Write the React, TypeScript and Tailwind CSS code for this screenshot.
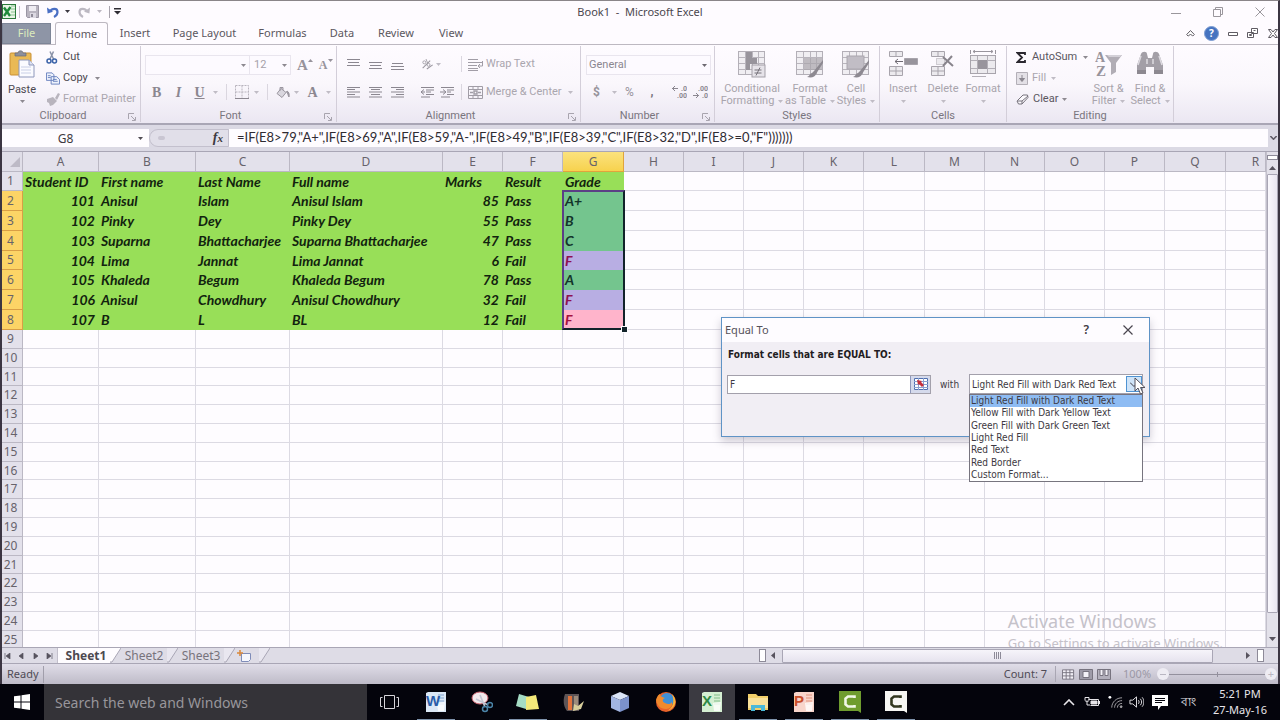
import type { ReactNode } from "react";
import clsx from "clsx";

const FORMULA =
  '=IF(E8>79,"A+",IF(E8>69,"A",IF(E8>59,"A-",IF(E8>49,"B",IF(E8>39,"C",IF(E8>32,"D",IF(E8>=0,"F")))))))';

const COLUMNS = [
  { name: "A", width: "w-[76px]" },
  { name: "B", width: "w-[97px]" },
  { name: "C", width: "w-[94px]" },
  { name: "D", width: "w-[153px]" },
  { name: "E", width: "w-[60px]" },
  { name: "F", width: "w-[60px]" },
  { name: "G", width: "w-[61px]" },
  { name: "H", width: "w-[60px]" },
  { name: "I", width: "w-[60px]" },
  { name: "J", width: "w-[60px]" },
  { name: "K", width: "w-[60px]" },
  { name: "L", width: "w-[61px]" },
  { name: "M", width: "w-[60px]" },
  { name: "N", width: "w-[60px]" },
  { name: "O", width: "w-[60px]" },
  { name: "P", width: "w-[60px]" },
  { name: "Q", width: "w-[61px]" },
  { name: "R", width: "" },
];

const ROWS: string[][] = [
  ["Student ID", "First name", "Last Name", "Full name", "Marks", "Result", "Grade"],
  ["101", "Anisul", "Islam", "Anisul Islam", "85", "Pass", "A+"],
  ["102", "Pinky", "Dey", "Pinky Dey", "55", "Pass", "B"],
  ["103", "Suparna", "Bhattacharjee", "Suparna Bhattacharjee", "47", "Pass", "C"],
  ["104", "Lima", "Jannat", "Lima Jannat", "6", "Fail", "F"],
  ["105", "Khaleda", "Begum", "Khaleda Begum", "78", "Pass", "A"],
  ["106", "Anisul", "Chowdhury", "Anisul Chowdhury", "32", "Fail", "F"],
  ["107", "B", "L", "BL", "12", "Fail", "F"],
];

const FORMATS = [
  "Light Red Fill with Dark Red Text",
  "Yellow Fill with Dark Yellow Text",
  "Green Fill with Dark Green Text",
  "Light Red Fill",
  "Red Text",
  "Red Border",
  "Custom Format...",
];

const ROW_COUNT = 25;

function rowHeight(row: number) {
  if (row === 1 || row === 5) return "h-[19px]";
  if (row <= 8) return "h-[20px]";
  return row % 5 === 1 ? "h-[18px]" : "h-[19px]";
}

function gradeFill(row: number, value: string) {
  if (row === 1) return "bg-[#98df58] text-[#12230f]";
  if (row === 8) return "bg-[#ffb4cb] text-[#a5123f]";
  if (value === "F") return "bg-[#b8aee3] text-[#8f1152]";
  return "bg-[#74c58e] text-[#12352a]";
}

function Caret({ className = "text-[#8d8990]" }: { className?: string }) {
  return (
    <svg viewBox="0 0 5 3" className={clsx("w-[5px] h-[3px] shrink-0", className)} fill="currentColor">
      <path d="M0 0h5L2.5 3z" />
    </svg>
  );
}

/* ---------- quick access toolbar and title bar ---------- */

function ExcelBadge() {
  return (
    <svg viewBox="0 0 14 15" className="w-[14px] h-[15px]">
      <rect x=".5" y=".5" width="13" height="14" fill="#e9f5e6" stroke="#2b7a3b" />
      <path d="M9 2h4M9 5h4M9 8h4M9 11h4" stroke="#8ac292" />
      <path d="M2 3.500l6 8.500M8.500 3l-6.500 9" stroke="#1f8a3a" strokeWidth="2.400" />
    </svg>
  );
}

function SaveIcon() {
  return (
    <svg viewBox="0 0 13 13" className="w-[13px] h-[13px]">
      <path d="M.5.5h12v12h-11l-1-1z" fill="#b9b4c0" stroke="#9a95a3" />
      <path d="M3 1h7v5H3z" fill="#efecf2" />
      <path d="M4 8h6v5H4z" fill="#dcd8e2" />
      <path d="M5 9h2v3H5z" fill="#8f8a98" />
    </svg>
  );
}

function UndoIcon({ className }: { className: string }) {
  return (
    <svg viewBox="0 0 12 12" className={clsx("w-3 h-3", className)} fill="none" stroke="currentColor">
      <path d="M3 5.500C5 2 10.500 1.800 10.500 6c0 2.500-1.500 4-3.500 5" strokeWidth="2.200" />
      <path d="M0 1.500l.6 6 5.400-1.700z" fill="currentColor" stroke="none" />
    </svg>
  );
}

function TitleBar() {
  return (
    <header className="grid grid-cols-[1fr_auto_1fr] items-center h-[21px] bg-[#fefbff]">
      <div className="flex items-center h-full">
        <ExcelBadge />
        <span className="ml-[3px] w-px h-3 bg-[#c9c4ce]" />
        <button aria-label="Save" className="ml-[6px]"><SaveIcon /></button>
        <button aria-label="Undo" className="ml-2 flex items-center gap-[6px]">
          <UndoIcon className="text-[#4a6fc4]" />
          <Caret className="text-[#3a3740]" />
        </button>
        <button aria-label="Redo" className="ml-2 flex items-center gap-[7px]">
          <UndoIcon className="text-[#bcb8c2] -scale-x-100" />
          <Caret className="text-[#bcb8c2]" />
        </button>
        <span className="ml-[7px] w-px h-3 bg-[#a9a4ae]" />
        <button aria-label="Customize Quick Access Toolbar" className="ml-1">
          <svg viewBox="0 0 7 7" className="w-[7px] h-[7px]" fill="#2f2c34">
            <path d="M0 0h7v1.500H0zM0 3h7L3.500 6.500z" />
          </svg>
        </button>
      </div>
      <h1 className="text-[11px] leading-4 text-[#4b474e]">Book1&nbsp; -&nbsp; Microsoft Excel</h1>
      <div className="flex justify-end items-center gap-8 pr-[13px] text-[#9a969c]">
        <button aria-label="Minimize">
          <svg viewBox="0 0 10 10" className="w-[10px] h-[10px]" stroke="currentColor"><path d="M0 6.500h10" /></svg>
        </button>
        <button aria-label="Restore">
          <svg viewBox="0 0 10 10" className="w-[10px] h-[10px]" fill="none" stroke="currentColor">
            <path d="M.5 2.500h7v7h-7zM2.500 2.500v-2h7v7h-2" />
          </svg>
        </button>
        <button aria-label="Close">
          <svg viewBox="0 0 10 10" className="w-[10px] h-[10px]" stroke="currentColor">
            <path d="M.5.5l9 9M9.500.5l-9 9" />
          </svg>
        </button>
      </div>
    </header>
  );
}

/* ---------- ribbon ---------- */

const TABS = [
  { label: "Insert", width: "w-[54px]" },
  { label: "Page Layout", width: "w-[85px]" },
  { label: "Formulas", width: "w-[71px]" },
  { label: "Data", width: "w-[48px]" },
  { label: "Review", width: "w-[60px]" },
  { label: "View", width: "w-[50px]" },
];

function RibbonTabs() {
  return (
    <nav className="flex items-end h-[23px] bg-[#fefbff] border-b border-[#bdb8c1] text-[11px] text-[#5b575e]">
      <button className="w-[49px] h-[21px] bg-[#8e95a6] border border-[#7d8597] text-[#dcebbd]">File</button>
      <button className="relative z-10 ml-1 -mb-px w-[53px] h-[23px] bg-[#fefbff] border border-b-0 border-[#bdb8c1] rounded-t-[3px]">
        Home
      </button>
      {TABS.map((tab) => (
        <button key={tab.label} className={clsx("h-[21px] whitespace-nowrap", tab.width)}>{tab.label}</button>
      ))}
      <div className="ml-auto flex items-center gap-[9px] h-[22px] text-[#5f5b63]">
        <button aria-label="Minimize the Ribbon">
          <svg viewBox="0 0 9 7" className="w-[9px] h-[7px]" fill="#fff" stroke="currentColor">
            <path d="M.7 4.500l3.800-4 3.800 4-1.500 1.500H6.500l-2-2-2 2H2z" />
          </svg>
        </button>
        <button aria-label="Help" className="w-[15px] h-[15px] rounded-full bg-[#4673c0] border border-[#7d9dd2] text-white text-[10px] leading-3 font-bold">
          ?
        </button>
        <button aria-label="Minimize Window">
          <svg viewBox="0 0 10 8" className="w-[10px] h-2" fill="#fff" stroke="currentColor"><path d="M.5 3.500h9v3h-9z" /></svg>
        </button>
        <button aria-label="Restore Window">
          <svg viewBox="0 0 12 10" className="w-3 h-[10px]" fill="#fff" stroke="currentColor">
            <path d="M4.500.5h6v5h-6zM6.500 2.500h2M.5 4.500h6v5h-6zM2.500 6.500h2v1h-2z" />
          </svg>
        </button>
        <button aria-label="Close Window">
          <svg viewBox="0 0 10 9" className="w-[10px] h-[9px]" fill="#fff" stroke="currentColor">
            <path d="M.5.5h2.500L5 3 7 .5h2.500L6.500 4.500l3 4H7L5 6 3 8.500H.5l3-4z" />
          </svg>
        </button>
      </div>
    </nav>
  );
}

interface GroupProps {
  title: string;
  width: string;
  launcher?: boolean;
  children: ReactNode;
}

function Group({ title, width, launcher, children }: GroupProps) {
  return (
    <section className={clsx("flex flex-col shrink-0 border-r border-[#d3ced9] my-px", width)}>
      <div className="flex-1 min-h-0">{children}</div>
      <div className={clsx("relative flex justify-center items-center h-3 text-[11px] leading-3 text-[#79757e]", launcher && "pr-4")}>
        {title}
        {launcher && (
          <button aria-label={`${title} options`} className="absolute right-1 top-[3px]">
            <svg viewBox="0 0 8 8" className="w-2 h-2" fill="none" stroke="#a8a4ae">
              <path d="M.5 6V.5H6M3 3l4 4M7.500 4v3.500H4" />
            </svg>
          </button>
        )}
      </div>
    </section>
  );
}

function PasteIcon() {
  return (
    <svg viewBox="0 0 26 28" className="w-[26px] h-7">
      <rect x="1" y="3" width="21" height="22" rx="1" fill="#e9b955" stroke="#c98f34" />
      <path d="M6 5V3h3c0-3 5-3 5 0h3v3H6z" fill="#8c8f9c" stroke="#696b78" strokeWidth=".7" />
      <path d="M10 10h10l5 5v12H10z" fill="#fbfbff" stroke="#8e97bb" />
      <path d="M20 10v5h5" fill="#dde2f3" stroke="#8e97bb" />
      <path d="M12 17h10M12 20h10M12 23h10" stroke="#c9cfe6" />
    </svg>
  );
}

function ClipboardGroup() {
  return (
    <Group title="Clipboard" width="w-[139px]" launcher>
      <div className="flex">
        <button className="flex flex-col items-center w-10 pt-1 text-[11px] leading-3 text-[#4c4850]">
          <PasteIcon />
          <span className="mt-[6px] mb-1">Paste</span>
          <Caret />
        </button>
        <div className="flex flex-col items-start pt-px pl-1 text-[11px] text-[#4c4850]">
          <button className="flex items-center gap-[5px] h-[21px]">
            <svg viewBox="0 0 12 13" className="w-3 h-[13px]" fill="none">
              <path d="M4 .5L7.500 8M7.500.5L4 8" stroke="#8a92a8" strokeWidth="1.500" />
              <circle cx="3" cy="10" r="2" stroke="#3a62a8" strokeWidth="1.500" />
              <circle cx="8.500" cy="10" r="2" stroke="#3a62a8" strokeWidth="1.500" />
            </svg>
            Cut
          </button>
          <button className="flex items-center gap-[3px] h-[21px]">
            <svg viewBox="0 0 15 13" className="w-[14px] h-[13px]" fill="#eef2fc" stroke="#6780bd">
              <path d="M.5.5h6l2 2v6h-8zM5.500 4.500h6l3 3v5h-9z" />
              <path d="M2 3.500h3M2 5.500h3M7.500 7.500h4M7.500 9.500h5" />
            </svg>
            Copy
            <span className="ml-1"><Caret /></span>
          </button>
          <button className="flex items-center gap-[3px] h-[21px] text-[#aaa6ae] whitespace-nowrap">
            <svg viewBox="0 0 14 13" className="w-[14px] h-[13px]" fill="#b8b4bd">
              <path d="M9 5l3-5 2 1-3 6zM1 6l6-2 4 4-4 4-3 1-1-3-2-1z" />
            </svg>
            Format Painter
          </button>
        </div>
      </div>
    </Group>
  );
}

function Divider() {
  return <span className="w-px h-4 bg-[#dad6df]" />;
}

function FontGroup() {
  return (
    <Group title="Font" width="w-[196px]" launcher>
      <div className="flex items-center pt-[9px] pl-1">
        <div className="relative flex items-center">
          <select aria-label="Font" disabled className="appearance-none w-[105px] h-5 border border-[#e9e5ee] bg-[#fdfaff]" />
          <Caret className="absolute right-1 text-[#8d8990]" />
        </div>
        <div className="relative flex items-center">
          <select aria-label="Font size" disabled className="appearance-none w-[41px] h-5 pl-1 border border-l-0 border-[#e9e5ee] bg-[#fdfaff] text-[11px] text-[#a5a1a9]">
            <option>12</option>
          </select>
          <Caret className="absolute right-1 text-[#8d8990]" />
        </div>
        <button aria-label="Grow font" className="ml-[6px] font-[Liberation_Serif] font-bold text-[15px] leading-5 text-[#97939c] flex">
          A<Caret className="mt-1 rotate-180 text-[#97939c]" />
        </button>
        <button aria-label="Shrink font" className="ml-[6px] font-[Liberation_Serif] font-bold text-[12px] leading-5 text-[#97939c] flex">
          A<Caret className="mt-1 text-[#97939c]" />
        </button>
      </div>
      <div className="flex items-center h-5 mt-[7px] pl-[11px] font-[Liberation_Serif] text-[14px] text-[#8b8790]">
        <button className="w-[9px] font-bold">B</button>
        <button className="w-[9px] ml-[13px] italic font-bold">I</button>
        <button className="w-[11px] ml-[11px] underline font-bold">U</button>
        <Caret className="ml-2 mr-2 text-[#c0bcc5]" />
        <Divider />
        <svg viewBox="0 0 14 14" className="ml-2 w-[14px] h-[14px]" fill="none" stroke="#b9b5be">
          <path d="M.5.5h13v13M.5.5v13M7 .5v13M.5 7h13" strokeDasharray="2 1" />
          <path d="M0 13.500h14" stroke="#8b8790" />
        </svg>
        <Caret className="ml-[5px] mr-2 text-[#c0bcc5]" />
        <Divider />
        <svg viewBox="0 0 14 13" className="ml-2 w-[14px] h-[13px]" fill="#d9d6de" stroke="#9b97a0">
          <path d="M5 2.500l5 4-4 5-5-4zM4 5V1.500h3V4" />
          <path d="M11 5c2 1 2.500 3 2 6-1-1-1-4-2.500-5z" fill="#9b97a0" />
        </svg>
        <Caret className="ml-1 mr-2 text-[#c0bcc5]" />
        <button aria-label="Font color" className="w-[11px] font-bold">A</button>
        <Caret className="ml-2 text-[#c0bcc5]" />
      </div>
    </Group>
  );
}

function LinesIcon({ path, className }: { path: string; className?: string }) {
  return (
    <svg viewBox="0 0 14 12" className={clsx("w-[14px] h-3", className)} stroke="#8b8790" fill="none">
      <path d={path} />
    </svg>
  );
}

function AlignmentGroup() {
  return (
    <Group title="Alignment" width="w-[244px]" launcher>
      <div className="flex items-center h-5 mt-2 pl-[10px]">
        <LinesIcon path="M0 1.500h13M1 4.500h11M0 7.500h13" />
        <LinesIcon path="M0 4.500h13M1 7.500h11M0 10.500h13" className="ml-2" />
        <LinesIcon path="M1 5.500h11M0 8.500h13M0 11.500h13" className="ml-2" />
        <span className="ml-2"><Divider /></span>
        <svg viewBox="0 0 18 14" className="ml-2 w-[15px] h-[14px]" fill="none" stroke="#9b97a0">
          <path d="M2 12l9-9M14 8l-7 5" strokeWidth="1.300" />
          <circle cx="4" cy="5" r="1.800" />
          <circle cx="9" cy="8" r="1.800" />
          <path d="M6 1l2 5" />
        </svg>
        <Caret className="text-[#c0bcc5]" />
        <span className="ml-[20px] w-px h-4 bg-[#dad6df]" />
        <button className="flex items-center gap-[3px] ml-[6px] text-[11px] text-[#aaa6ae] whitespace-nowrap">
          <svg viewBox="0 0 15 13" className="w-[15px] h-[13px]" fill="none" stroke="#a19da6">
            <path d="M0 1.500h10M0 4.500h14M0 7.500h9M0 10.500h10M0 12.500h10M14.500 3v5h-4M12 6l-2 2 2 2" />
          </svg>
          Wrap Text
        </button>
      </div>
      <div className="flex items-center h-5 mt-2 pl-[10px]">
        <LinesIcon path="M0 1.500h13M0 3.500h8M0 6h13M0 8.500h8M0 11h13" />
        <LinesIcon path="M0 1.500h13M2 3.500h9M0 6h13M2 8.500h9M0 11h13" className="ml-2" />
        <LinesIcon path="M0 1.500h13M5 3.500h8M0 6h13M5 8.500h8M0 11h13" className="ml-2" />
        <span className="ml-2"><Divider /></span>
        <LinesIcon path="M1 1.500h13M6 4h8M6 6h5M6 8.500h8M1 11h9M4 3.500L1 6l3 2.500M1 6h4" className="ml-[7px]" />
        <LinesIcon path="M1 1.500h13M7 4h7M7 6h4M7 8.500h7M1 11h9M3 3.500L6 6 3 8.500M0 6h5" className="ml-[6px]" />
        <span className="ml-[7px] w-px h-4 bg-[#dad6df]" />
        <button className="flex items-center gap-[3px] ml-[6px] text-[11px] text-[#aaa6ae] whitespace-nowrap">
          <svg viewBox="0 0 15 13" className="w-[15px] h-[13px]" fill="none" stroke="#a19da6">
            <path d="M.5.5h14v12H.5zM.5 3.500h14M.5 9.500h14M5 .5v3M10 .5v3M5 9.500v3M10 9.500v3" />
            <path d="M2 6.500h3M13 6.500h-3M6 5h3v3H6z" strokeWidth="1.400" />
          </svg>
          Merge &amp; Center
          <Caret className="ml-[3px] text-[#c0bcc5]" />
        </button>
      </div>
    </Group>
  );
}

function DecimalIcon({ top, bottom, arrow }: { top: string; bottom: string; arrow: string }) {
  return (
    <svg viewBox="0 0 15 14" className="w-[15px] h-[14px]" fill="#8b8790">
      <text x="15" y="6" textAnchor="end" fontSize="7" fontWeight="bold">{top}</text>
      <text x="15" y="13" textAnchor="end" fontSize="7" fontWeight="bold">{bottom}</text>
      <path d={arrow} fill="none" stroke="#8b8790" />
    </svg>
  );
}

function NumberGroup() {
  return (
    <Group title="Number" width="w-[134px]" launcher>
      <div className="relative flex items-center mt-[9px] ml-[5px] w-[125px]">
        <select aria-label="Number format" disabled className="appearance-none w-full h-5 pl-[2px] border border-[#e9e5ee] bg-[#fdfaff] text-[11px] text-[#8b8790]">
          <option>General</option>
        </select>
        <Caret className="absolute right-1 text-[#6d6971]" />
      </div>
      <div className="flex items-center h-5 mt-[7px] pl-3 text-[12px] text-[#97939c]">
        <button className="w-[7px] font-bold">$</button>
        <Caret className="ml-3 text-[#c0bcc5]" />
        <button className="ml-[6px] w-[13px]">%</button>
        <button aria-label="Comma style" className="ml-[14px] w-1 font-bold leading-3 text-[#77737c]">,</button>
        <span className="ml-[10px]"><Divider /></span>
        <span className="ml-2 flex gap-[6px]">
          <DecimalIcon top=".0" bottom=".00" arrow="M0 3.500h6M3 1L.5 3.500 3 6" />
          <DecimalIcon top=".00" bottom=".0" arrow="M0 10.500h6M3 8l2.500 2.500L3 13" />
        </span>
      </div>
    </Group>
  );
}

interface BigButtonProps {
  width: string;
  lines: string[];
  icon: ReactNode;
}

function BigButton({ width, lines, icon }: BigButtonProps) {
  return (
    <button className={clsx("flex flex-col items-center pt-1 text-[11px] leading-3 text-[#a8a4ac] whitespace-nowrap", width)}>
      {icon}
      <span className="mt-[5px]">{lines[0]}</span>
      <span className="flex items-center gap-1 h-3">
        {lines[1]}
        <Caret className="text-[#c0bcc5]" />
      </span>
    </button>
  );
}

function TableIcon({ children }: { children?: ReactNode }) {
  return (
    <svg viewBox="0 0 28 28" className="w-7 h-7" fill="none">
      <rect x=".5" y="1.500" width="26" height="23" fill="#f0eef2" stroke="#b3afb7" />
      <path d="M1 7.500h25M1 13.500h25M1 19.500h25M7.500 2v22M14.500 2v22M20.500 2v22" stroke="#b9b5bd" />
      {children}
    </svg>
  );
}

function StylesGroup() {
  return (
    <Group title="Styles" width="w-[165px]">
      <div className="flex pl-1">
        <BigButton
          width="w-[66px]"
          lines={["Conditional", "Formatting"]}
          icon={
            <TableIcon>
              <path d="M8 2h6v6h5v6h-7v6H8z" fill="#98949c" />
              <rect x="14" y="15" width="13" height="12" fill="#e6e3e9" stroke="#a39fa7" />
              <path d="M16.500 20h7M16.500 23h7M22 17.500l-4 8" stroke="#77737b" />
            </TableIcon>
          }
        />
        <BigButton
          width="w-[50px]"
          lines={["Format", "as Table"]}
          icon={
            <TableIcon>
              <path d="M8 8h18v12H8z" fill="#a9a5ad" fillOpacity=".7" />
              <path d="M27 10l-9 11-2 2c-2 0-2 3-5 4 5 1 8 0 9-3l7-11z" fill="#8d8991" />
            </TableIcon>
          }
        />
        <BigButton
          width="w-[42px]"
          lines={["Cell", "Styles"]}
          icon={
            <TableIcon>
              <rect x="5" y="6" width="17" height="13" fill="#c1bdc5" stroke="#aaa6ae" />
              <path d="M27 10l-9 11-2 2c-2 0-2 3-5 4 5 1 8 0 9-3l7-11z" fill="#8d8991" />
            </TableIcon>
          }
        />
      </div>
    </Group>
  );
}

function CellsGroup() {
  return (
    <Group title="Cells" width="w-[127px]">
      <div className="flex pl-[2px]">
        <BigButton
          width="w-[42px]"
          lines={["Insert", ""]}
          icon={
            <svg viewBox="0 0 30 28" className="w-[30px] h-7" fill="#eceaee" stroke="#a8a4ac">
              <path d="M1.500 1.500h13v5h-13zM8 1.500v5M1.500 16.500h13v9h-13zM8 16.500v9M1.500 21h13" />
              <path d="M16.500 8.500h13v6h-13z" fill="#98949c" />
              <path d="M7 11.500h8M10 9l-3 2.500 3 2.500" fill="none" stroke="#6e6a72" />
            </svg>
          }
        />
        <BigButton
          width="w-[38px]"
          lines={["Delete", ""]}
          icon={
            <svg viewBox="0 0 26 28" className="w-[26px] h-7" fill="#eceaee" stroke="#a8a4ac">
              <path d="M1.500 1.500h13v5h-13zM8 1.500v5M1.500 16.500h13v9h-13zM8 16.500v9M1.500 21h13" />
              <path d="M6.500 8.500h8v6h-8z" strokeDasharray="1 1" />
              <path d="M13 7l10 9M22 6l-9 10" fill="none" stroke="#88848c" strokeWidth="2" />
            </svg>
          }
        />
        <BigButton
          width="w-[42px]"
          lines={["Format", ""]}
          icon={
            <svg viewBox="0 0 28 28" className="w-7 h-7" fill="none">
              <path d="M1.500 0v4M26.500 0v4M4 1.500h20M6 0L4 1.500 6 3M22 0l2 1.500L22 3" stroke="#98949c" />
              <rect x="1.500" y="5.500" width="25" height="18" fill="#eceaee" stroke="#a8a4ac" />
              <path d="M2 10.500h24M2 18.500h24M8.500 6v17M18.500 6v17M3 26.500h14" stroke="#b3afb7" />
              <path d="M9 10h9v9H9z" fill="#98949c" />
            </svg>
          }
        />
      </div>
    </Group>
  );
}

function EditingGroup() {
  return (
    <Group title="Editing" width="w-[167px]">
      <div className="flex">
        <div className="flex flex-col items-start w-[80px] pl-[9px] pt-px text-[11px] text-[#5a565e]">
          <button className="flex items-center gap-[6px] h-[21px]">
            <svg viewBox="0 0 10 11" className="w-[10px] h-[11px]" fill="none" stroke="#2b282f" strokeWidth="1.800">
              <path d="M9 3V1H1.500L6 5.500 1.500 10H9V8" />
            </svg>
            AutoSum
            <Caret />
          </button>
          <button className="flex items-center gap-1 h-[21px] text-[#aaa6ae]">
            <svg viewBox="0 0 12 13" className="w-3 h-[13px]" fill="#e3e0e6" stroke="#b3afb7">
              <path d="M.5.5h11v12H.5z" />
              <path d="M6 3v6M3.500 6.500L6 9.500l2.500-3z" fill="#8b8790" stroke="#8b8790" />
            </svg>
            Fill
            <Caret className="ml-px text-[#c0bcc5]" />
          </button>
          <button className="flex items-center gap-1 h-[21px]">
            <svg viewBox="0 0 13 11" className="w-[13px] h-[11px]" fill="#fbf9fd" stroke="#77737c">
              <path d="M1 7l6-6h4.500L12 3.500 6 10H2.500z" />
              <path d="M1 7h5l6-5M6 7v3" />
            </svg>
            Clear
            <Caret />
          </button>
        </div>
        <BigButton
          width="w-[43px]"
          lines={["Sort &", "Filter"]}
          icon={
            <svg viewBox="0 0 28 28" className="w-7 h-7" fill="#97939b">
              <text x="0" y="12" fontSize="14" fontWeight="bold" fontFamily="Liberation Serif">A</text>
              <text x="1" y="26" fontSize="15" fontWeight="bold" fontFamily="Liberation Serif">Z</text>
              <path d="M10 5h17l-6 8v9l-5 3V13z" fill="#b1adb5" />
              <path d="M12 5h15l-2 2H14z" fill="#d3d0d7" />
            </svg>
          }
        />
        <BigButton
          width="w-[40px]"
          lines={["Find &", "Select"]}
          icon={
            <svg viewBox="0 0 28 28" className="w-7 h-7" fill="#a39fa7">
              <path d="M5 4c1-3 6-3 6 0l1 4h4l1-4c0-3 5-3 6 0l4 11v9h-9v-7h-8v7H1v-9z" />
              <path d="M5 6l-3 9M23 6l3 9M11 9v5M17 9v5" stroke="#dedbe1" strokeWidth="1.500" />
              <path d="M1 20h9v4H1zM18 20h9v4h-9z" fill="#8c8890" />
            </svg>
          }
        />
      </div>
    </Group>
  );
}

function Ribbon() {
  return (
    <div className="flex h-[80px] overflow-hidden bg-linear-to-b from-[#fefbff] via-[#faf7fc] to-[#ebe7f2] border-b-2 border-[#a9a6b5] font-[Roboto]">
      <ClipboardGroup />
      <FontGroup />
      <AlignmentGroup />
      <NumberGroup />
      <StylesGroup />
      <CellsGroup />
      <EditingGroup />
    </div>
  );
}

/* ---------- formula bar ---------- */

function FormulaBar() {
  return (
    <div className="flex h-[27px] py-1 bg-[#dbd9e4] border-b border-[#a9a6b5]">
      <div className="relative flex items-center">
        <input
          aria-label="Name box"
          defaultValue="G8"
          className="w-[147px] h-full pr-5 bg-[#fefcff] text-center text-[12px] text-[#3d3940] outline-none"
        />
        <Caret className="absolute right-[6px] text-[#4f4b53]" />
      </div>
      <div className="flex items-center justify-between w-[80px] pl-2 pr-[5px] bg-[#e1dfe9] border border-[#c3c0cd] rounded-l-full">
        <span className="w-[7px] h-1 rounded-full bg-[#c9c6d2]" />
        <button aria-label="Insert function" className="font-[Liberation_Serif] italic font-bold text-[14px] leading-4 text-[#3c3940]">
          f<span className="text-[11px]">x</span>
        </button>
      </div>
      <input
        aria-label="Formula"
        defaultValue={FORMULA}
        className="flex-1 min-w-0 pl-2 bg-[#fefcff] font-[Lato] text-[13px] text-[#2f2b32] outline-none"
      />
      <button aria-label="Expand formula bar" className="flex items-center justify-center w-[10px] bg-[#dbd9e4]">
        <svg viewBox="0 0 8 5" className="w-[7px] h-1" fill="none" stroke="#5f5b66" strokeWidth="2"><path d="M0 0l4 4 4-4" /></svg>
      </button>
    </div>
  );
}

/* ---------- worksheet ---------- */

function Sheet() {
  const rows = Array.from({ length: ROW_COUNT }, (_, i) => i + 1);
  return (
    <table className="w-full table-fixed border-separate border-spacing-0">
      <colgroup>
        <col className="w-[21px]" />
        {COLUMNS.map((col) => <col key={col.name} className={col.width} />)}
      </colgroup>
      <thead className="text-[12px] leading-4 text-[#67636b]">
        <tr className="h-5">
          <th className="p-0 bg-[#e0dee8] border-r border-b border-[#bbb8c4]">
            <svg viewBox="0 0 10 10" className="ml-auto mr-[2px] w-[10px] h-[10px]" fill="#bdbac6"><path d="M10 0v10H0z" /></svg>
          </th>
          {COLUMNS.map((col) => (
            <th
              key={col.name}
              scope="col"
              className={clsx(
                "p-0 font-normal border-r border-b",
                col.name === "G"
                  ? "bg-linear-to-b from-[#fbe27c] to-[#f7d24d] border-[#e0a43c]"
                  : "bg-[#e3e1eb] border-[#bbb8c4]",
                col.name === "R" && "pl-5",
              )}
            >
              {col.name}
            </th>
          ))}
        </tr>
      </thead>
      <tbody>
        {rows.map((row) => (
          <tr key={row} className={rowHeight(row)}>
            <th
              scope="row"
              className={clsx(
                "p-0 pr-[3px] border-r border-b font-normal text-[12px] leading-4 text-[#67636b]",
                row >= 2 && row <= 8 ? "bg-[#fcd466] border-[#d99f45]" : "bg-[#e3e1eb] border-[#bbb8c4]",
              )}
            >
              {row}
            </th>
            {COLUMNS.map((col, i) => {
              const value = ROWS[row - 1]?.[i];
              if (value === undefined) {
                return <td key={col.name} className="p-0 border-r border-b border-[#dcdae3] bg-[#fefcff]" />;
              }
              return (
                <td
                  key={col.name}
                  className={clsx(
                    "relative p-0 pl-[2px] pr-1 font-[Lato] font-bold italic text-[14px] leading-4 whitespace-nowrap",
                    i === 6 ? gradeFill(row, value) : "bg-[#98df58] text-[#12230f]",
                    row > 1 && (i === 0 || i === 4) && "text-right",
                  )}
                >
                  {value}
                  {i === 6 && row === 2 && <Selection />}
                </td>
              );
            })}
          </tr>
        ))}
      </tbody>
    </table>
  );
}

function Selection() {
  return (
    <div className="absolute z-10 -left-px -top-px w-[63px] h-[140px] border-2 border-l-[#5b3f86] border-t-[#5b3f86] border-r-[#12232a] border-b-[#12232a]">
      <span className="absolute -right-1 -bottom-1 w-[5px] h-[5px] bg-[#12232a] outline outline-[#fefcff]" />
    </div>
  );
}

function VerticalScroll() {
  return (
    <div className="flex flex-col items-center w-[12px] shrink-0 bg-[#e3e1ea] border-l border-[#c3c0cc]">
      <span className="mt-[3px] w-full h-[5px] bg-white border border-[#8d8a98]" />
      <svg viewBox="0 0 7 4" className="mt-[6px] mb-1 w-[7px] h-1" fill="#57535e"><path d="M0 4h7L3.500 0z" /></svg>
      <div className="w-full flex-1 bg-linear-to-r from-[#faf8fd] to-[#e9e6f1] border border-[#a9a6b5] rounded-[1px]" />
      <svg viewBox="0 0 7 4" className="mt-6 mb-[6px] w-[7px] h-1" fill="#57535e"><path d="M0 0h7L3.500 4z" /></svg>
    </div>
  );
}

function SheetTabs() {
  const nav = ["M1 0v6M6 0L2 3l4 3z", "M5 0L1 3l4 3z", "M2 0l4 3-4 3z", "M1 0l4 3-4 3zM6 0v6"];
  return (
    <div className="relative flex h-[16px] bg-[#dedce6] border-t border-[#a9a6b5] text-[12px] leading-4 text-[#77737c]">
      <div className="flex items-center gap-[7px] w-[56px] pl-[2px] border-r border-[#c3c0cc]">
        {nav.map((d) => (
          <svg key={d} viewBox="0 0 7 6" className="w-[7px] h-[6px]" fill="#57535e" stroke="#57535e" strokeWidth=".7"><path d={d} /></svg>
        ))}
      </div>
      <button className="w-[52px] bg-[#fefcff] pl-1 font-bold leading-[14px] text-[#4c4850]">Sheet1</button>
      <TabEdge className="text-[#fefcff]" />
      <button className="w-[46px] leading-[14px]">Sheet2</button>
      <TabEdge className="text-[#e9e7f0]" />
      <button className="w-[46px] leading-[14px]">Sheet3</button>
      <TabEdge className="text-[#e9e7f0]" />
      <button aria-label="Insert worksheet" className="flex items-center w-[24px] pl-[2px]">
        <svg viewBox="0 0 14 12" className="w-[14px] h-3">
          <path d="M4.500 3.500h9v6l-2 2h-7z" fill="#f5f6fd" stroke="#7f8cb8" />
          <path d="M3 0v6M0 3h6" stroke="#d9873a" strokeWidth="1.500" />
        </svg>
      </button>
      <TabEdge className="text-[#e9e7f0]" />
      <div className="ml-auto flex items-center w-[519px] h-full">
        <span className="w-[7px] h-[13px] bg-white border border-[#8d8a98]" />
        <svg viewBox="0 0 4 7" className="ml-[5px] w-1 h-[7px]" fill="#57535e"><path d="M4 0v7L0 3.500z" /></svg>
        <div className="ml-[7px] flex items-center justify-center gap-[1px] w-[431px] h-[14px] bg-linear-to-b from-[#f6f4fa] to-[#e6e3ee] border border-[#a9a6b5] rounded-[1px]">
          {[0, 1, 2, 3].map((n) => <span key={n} className="w-px h-[7px] bg-[#8d8a98]" />)}
        </div>
        <svg viewBox="0 0 4 7" className="ml-auto w-1 h-[7px]" fill="#57535e"><path d="M0 0v7l4-3.500z" /></svg>
        <span className="ml-[7px] mr-[14px] w-[7px] h-[13px] bg-white border border-[#8d8a98]" />
      </div>
    </div>
  );
}

function TabEdge({ className }: { className: string }) {
  return (
    <svg viewBox="0 0 11 15" className={clsx("w-[11px] h-[15px]", className)}>
      <path d="M0 0h11L2 14H0z" fill="currentColor" />
      <path d="M11 0L2 14H0" fill="none" stroke="#a9a6b5" />
    </svg>
  );
}

function StatusBar() {
  return (
    <footer className="flex items-center h-[21px] bg-linear-to-b from-[#e0dde8] to-[#bebbc8] border-t border-[#a9a6b5] text-[11px] text-[#4f4b55]">
      <span className="w-[42px] h-[17px] pl-[5px] leading-4 border-r border-[#a19eab]">Ready</span>
      <span className="ml-auto pr-2 leading-4 border-r border-[#a9a6b3]">Count: 7</span>
      <div className="flex items-center gap-1 ml-[6px]">
        <button aria-label="Normal view">
          <svg viewBox="0 0 14 11" className="w-[13px] h-[11px]" fill="#f0eef5" stroke="#77737f"><path d="M.5.5h12v10H.5zM.5 3.500h12M.5 7h12M4.500.5v10M8.500.5v10" /></svg>
        </button>
        <button aria-label="Page layout view">
          <svg viewBox="0 0 14 11" className="w-[14px] h-[11px]" fill="#9e9ba8" stroke="#77737f"><path d="M.5.5h13v10H.5z" /><path d="M4 2.500h6v6H4z" fill="#f4f2f8" /></svg>
        </button>
        <button aria-label="Page break preview">
          <svg viewBox="0 0 14 11" className="w-[14px] h-[11px]" fill="#b3b0bc" stroke="#77737f"><path d="M.5.5h13v10H.5z" /><path d="M3 .5h3v6H3zM8 .5h3v6H8z" fill="#f4f2f8" /></svg>
        </button>
      </div>
      <button className="ml-3 w-[26px] text-[#9b98a5]">100%</button>
      <button aria-label="Zoom out" className="flex items-center justify-center ml-2 w-3 h-3 rounded-full bg-[#eeecf3]">
        <span className="w-[6px] h-px bg-[#b9b6c2]" />
      </button>
      <input
        type="range"
        aria-label="Zoom"
        disabled
        className="appearance-none w-[96px] h-px bg-[#93909d] [&::-webkit-slider-thumb]:appearance-none [&::-webkit-slider-thumb]:w-px [&::-webkit-slider-thumb]:h-[5px] [&::-webkit-slider-thumb]:bg-[#93909d]"
      />
      <button aria-label="Zoom in" className="w-3 h-3 mr-px rounded-full bg-[#eeecf3] text-[11px] leading-3 text-[#b9b6c2]">+</button>
    </footer>
  );
}

/* ---------- Equal To dialog ---------- */

function EqualToDialog() {
  return (
    <div
      role="dialog"
      aria-labelledby="dialog-title"
      className="absolute z-20 left-[721px] top-[317px] w-[429px] h-[120px] bg-[#f1eef4] border border-[#5f93c6] shadow-[0_4px_8px_rgba(60,50,80,0.25)] text-[10px] text-[#3d3942]"
    >
      <div className="flex items-center h-6 pl-[3px] pr-4 bg-[#fefcff]">
        <h2 id="dialog-title" className="text-[11px] leading-4 text-[#55515a]">Equal To</h2>
        <button aria-label="Help" className="ml-auto text-[12px] font-semibold">?</button>
        <button aria-label="Close" className="ml-[34px]">
          <svg viewBox="0 0 10 10" className="w-[10px] h-[10px]" stroke="#4a464f" strokeWidth="1.200"><path d="M.5.5l9 9M9.500.5l-9 9" /></svg>
        </button>
      </div>
      <label htmlFor="criteria" className="block mt-[5px] pl-[6px] font-[DejaVu_Sans_Condensed] font-bold leading-4 text-[#1f1c22]">
        Format cells that are EQUAL TO:
      </label>
      <div className="flex items-center mt-[11px] pl-[5px] font-[DejaVu_Sans_Condensed]">
        <div className="flex items-center w-[204px] h-[19px] bg-white border border-[#a3a0ab]">
          <input id="criteria" defaultValue="F" className="flex-1 min-w-0 h-full pl-[2px] outline-none" />
          <button aria-label="Collapse dialog" className="flex items-center justify-center w-5 h-full bg-[#d5daec] border-l border-[#8e97bb]">
            <svg viewBox="0 0 14 12" className="w-[14px] h-3">
              <path d="M.5.5h13v11H.5z" fill="#fff" stroke="#4f6fb0" />
              <path d="M0 3.500h14M0 6.500h14M0 9.500h14M4.500 0v12M9.500 0v12" stroke="#8aa0d0" />
              <path d="M3 2l5 1-1 1 3 3-2 2-3-3-1 1z" fill="#c5303c" />
            </svg>
          </button>
        </div>
        <label htmlFor="format" className="ml-[9px] w-[29px]">with</label>
        <div className="relative">
          <select id="format" className="appearance-none block w-[174px] h-5 pl-[2px] bg-white border border-[#a3a0ab] outline-none">
            {FORMATS.map((format) => <option key={format}>{format}</option>)}
          </select>
          <span className="absolute right-px top-[2px] flex items-center justify-center w-4 h-4 bg-[#cfe4f8] border border-[#4f93d2]">
            <svg viewBox="0 0 8 5" className="w-2 h-[5px]" fill="none" stroke="#3d3942"><path d="M0 .5l4 4 4-4" /></svg>
          </span>
          <svg viewBox="0 0 12 18" className="absolute z-10 left-[165px] top-[3px] w-3 h-[18px]">
            <path d="M1 1v13l3-3 2.500 6 2.500-1-2.500-5.500H11z" fill="#fff" stroke="#55515a" />
          </svg>
          <ul role="listbox" aria-label="Format" className="absolute left-0 top-5 flex flex-col w-[174px] h-[88px] bg-white border border-[#77747f]">
            {FORMATS.map((format, i) => (
              <li
                key={format}
                role="option"
                aria-selected={i === 0}
                className={clsx("flex-1 flex items-center pl-px leading-3 whitespace-nowrap", i === 0 && "bg-[#8ebcf3]")}
              >
                {format}
              </li>
            ))}
          </ul>
        </div>
      </div>
    </div>
  );
}

/* ---------- taskbar ---------- */

function TaskButton({ label, open, active, children }: { label: string; open?: boolean; active?: boolean; children: ReactNode }) {
  return (
    <button aria-label={label} className={clsx("flex items-center justify-center w-[46px] h-full", active && "bg-[#3b3a41]")}>
      <span className={clsx("flex items-center justify-center w-[38px] h-full border-y", open ? "border-t-transparent border-b-[#7f93ab]" : "border-transparent")}>
        {children}
      </span>
    </button>
  );
}

function OfficeIcon({ letter, color, tint }: { letter: string; color: string; tint: string }) {
  return (
    <svg viewBox="0 0 22 22" className="w-[22px] h-[22px]">
      <path d="M1 2l2-1h18v20H1z" fill={tint} />
      <path d="M13 4h6M13 7h6M13 10h6M13 13h6" stroke={color} strokeOpacity=".5" />
      <path d="M12 12l8-1-1 9h-6z" fill="#fff" fillOpacity=".8" />
      <text x="1" y="15" fontSize="15" fontWeight="bold" fill={color} fontFamily="Liberation Sans">{letter}</text>
    </svg>
  );
}

function CamtasiaIcon({ bg, fg }: { bg: string; fg: string }) {
  return (
    <svg viewBox="0 0 24 22" className="w-6 h-[22px]">
      <path d="M1 0h22v22l-3-2H1z" fill={bg} />
      <path d="M16.500 7V5.500H10l-2.500 2v6l2.500 2h6.500V14" fill="none" stroke={fg} strokeWidth="2.600" />
    </svg>
  );
}

function Taskbar() {
  return (
    <div className="flex h-9 bg-[#04040c] text-white">
      <button aria-label="Start" className="flex items-center justify-center w-[44px]">
        <svg viewBox="0 0 16 16" className="w-4 h-4" fill="#fff">
          <path d="M0 2.300l6.500-.9v6.100H0zM7.500 1.200L16 0v7.500H7.500zM0 8.500h6.500v6.100L0 13.700zM7.500 8.500H16V16l-8.500-1.200z" />
        </svg>
      </button>
      <input
        aria-label="Search"
        placeholder="Search the web and Windows"
        className="w-[323px] pl-[11px] bg-[#343338] text-[14px] placeholder:text-[#98969b] outline-none"
      />
      <TaskButton label="Task View">
        <svg viewBox="0 0 20 14" className="w-5 h-[14px]" fill="none" stroke="#d7d5da"><path d="M4.500.5h10v13h-10zM2.500 2.500h-2v9h2M16.500 2.500h2v9h-2" /></svg>
      </TaskButton>
      <TaskButton label="Word" open><OfficeIcon letter="W" color="#2a5da8" tint="#dbe8f6" /></TaskButton>
      <TaskButton label="Snipping Tool">
        <svg viewBox="0 0 22 22" className="w-[22px] h-[22px]" fill="none">
          <ellipse cx="9" cy="7" rx="8" ry="6" fill="#f3e9ec" stroke="#c8616d" />
          <path d="M5 8l12 6M9 4l5 12" stroke="#c3c7d4" strokeWidth="1.600" />
          <circle cx="14" cy="18" r="2.500" stroke="#4b84a8" strokeWidth="1.500" />
          <circle cx="19" cy="14" r="2.500" stroke="#4b84a8" strokeWidth="1.500" />
        </svg>
      </TaskButton>
      <TaskButton label="Sticky Notes" open>
        <svg viewBox="0 0 24 20" className="w-6 h-5">
          <path d="M3 2l10 3-3 12L0 14z" fill="#a5dcc4" />
          <path d="M10 5l10-2 3 14-13 1z" fill="#f4e97a" />
        </svg>
      </TaskButton>
      <TaskButton label="Media Player">
        <svg viewBox="0 0 24 22" className="w-6 h-[22px]">
          <path d="M3 3h14v17H5C1 15 1 8 3 3z" fill="#5d5456" />
          <path d="M6 5h4v14H6z" fill="#e2733b" />
          <path d="M12 5h4v10h-4z" fill="#9c8c7c" />
          <path d="M12 13l4 2 6-5-3 8-8 2z" fill="#d8cf9c" />
        </svg>
      </TaskButton>
      <TaskButton label="VirtualBox">
        <svg viewBox="0 0 20 22" className="w-5 h-[22px]">
          <path d="M10 1l9 4-9 4-9-4z" fill="#dbe5f7" />
          <path d="M1 5l9 4v12l-9-4z" fill="#a3b6e2" />
          <path d="M19 5l-9 4v12l9-4z" fill="#7b91cb" />
        </svg>
      </TaskButton>
      <TaskButton label="Firefox">
        <svg viewBox="0 0 22 22" className="w-[22px] h-[22px]">
          <circle cx="11" cy="11" r="10" fill="#e8602a" />
          <circle cx="12" cy="9" r="7" fill="#3f8fd6" />
          <path d="M1 9C2 5 4 3 5 3c0 3 3 3 5 4-3 1-3 4 0 5 3 2 6 1 7-1 1 4-2 7-6 7-6 0-9-4-10-9z" fill="#f08a2c" />
          <path d="M17 3c3 3 4 7 3 10s-4 6-8 7c6-3 8-9 5-17z" fill="#f7b93c" />
        </svg>
      </TaskButton>
      <TaskButton label="Excel" active><OfficeIcon letter="X" color="#2f8a45" tint="#d5efd2" /></TaskButton>
      <TaskButton label="File Explorer" open>
        <svg viewBox="0 0 22 20" className="w-[22px] h-5">
          <path d="M1 2h8l2 2h10v14H1z" fill="#f2cf6b" />
          <path d="M1 6h20v10H1z" fill="#f9e19a" />
          <path d="M4 19v-6h14v6h-4v-3H8v3z" fill="#4bb9d8" />
        </svg>
      </TaskButton>
      <TaskButton label="PowerPoint" open><OfficeIcon letter="P" color="#c9502b" tint="#f8d5cb" /></TaskButton>
      <TaskButton label="Camtasia Studio" open><CamtasiaIcon bg="#6f9c2e" fg="#f1f7e6" /></TaskButton>
      <TaskButton label="Camtasia Recorder" open><CamtasiaIcon bg="#f7f7f4" fg="#32371f" /></TaskButton>
      <div className="ml-auto flex items-center pr-2 text-[#e8e6ea]">
        <button aria-label="Show hidden icons" className="w-[23px] flex justify-center">
          <svg viewBox="0 0 12 7" className="w-3 h-[7px]" fill="none" stroke="currentColor" strokeWidth="1.600"><path d="M1 6l5-5 5 5" /></svg>
        </button>
        <svg viewBox="0 0 16 12" className="ml-1 w-4 h-3" fill="none" stroke="currentColor">
          <path d="M4.500 3.500h10v6h-8M15.500 5v3M1 1.500h4v3c0 1-4 1-4 0zM3 5v4h3" />
          <path d="M7 5h6v3H7z" fill="currentColor" />
        </svg>
        <svg viewBox="0 0 16 14" className="ml-2 w-[15px] h-[14px]" fill="none" stroke="#a5a3a8">
          <path d="M4 13C4 7 9 2.500 15 2.500M7 13c0-4 3.500-7.500 8-7.500M10 13c0-2.500 2-4.500 5-4.500" />
          <circle cx="14" cy="12" r="1" fill="#a5a3a8" />
          <circle cx="2" cy="2" r="1.500" fill="#fff" stroke="none" />
        </svg>
        <svg viewBox="0 0 16 14" className="ml-[6px] w-[15px] h-[14px]" fill="none" stroke="currentColor">
          <path d="M1 5h3l4-3.500v11L4 9H1zM10 5c1 1 1 3 0 4M12 3.500c2 2 2 5 0 7M14 2c2.500 3 2.500 7 0 10" />
        </svg>
        <svg viewBox="0 0 16 15" className="ml-2 w-4 h-[15px]">
          <path d="M0 0h16v11H9l-3 4v-4H0z" fill="#fff" />
          <path d="M3 3.500h10M3 5.500h10M3 7.500h7" stroke="#04040c" />
        </svg>
        <span className="ml-3 w-[16px] text-center text-[12px] leading-4 whitespace-nowrap">বাং</span>
        <div className="ml-3 flex flex-col items-center w-[64px] text-[11px] leading-4 whitespace-nowrap">
          <span>5:21 PM</span>
          <span>27-May-16</span>
        </div>
      </div>
    </div>
  );
}

export default function App() {
  return (
    <div className="relative flex flex-col h-screen overflow-hidden bg-[#04040c] font-['Noto_Sans','Open_Sans',sans-serif]">
      <div className="flex-1 min-h-0 flex flex-col border-t border-x-2 border-t-[#8a8589] border-x-[#3b3542]">
        <TitleBar />
        <RibbonTabs />
        <Ribbon />
        <FormulaBar />
        <main className="relative flex flex-1 min-h-0">
          <div className="flex-1 min-w-0 overflow-hidden">
            <Sheet />
          </div>
          <VerticalScroll />
          <div className="absolute right-[55px] -bottom-[6px] text-[#c5c2ca] whitespace-nowrap">
            <p className="text-[18px] leading-6">Activate Windows</p>
            <p className="text-[13px] leading-5">Go to Settings to activate Windows.</p>
          </div>
        </main>
        <SheetTabs />
        <StatusBar />
      </div>
      <Taskbar />
      <EqualToDialog />
    </div>
  );
}
